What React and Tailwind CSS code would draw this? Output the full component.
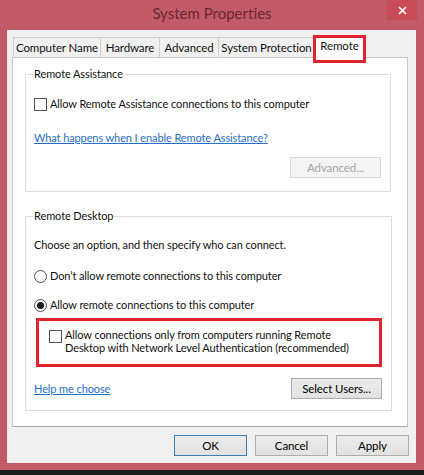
import React from "react";

const tabs = [
  { label: "Computer Name", w: "w-[88px]" },
  { label: "Hardware", w: "w-[60px]" },
  { label: "Advanced", w: "w-[60px]" },
  { label: "System Protection", w: "w-[97px]" },
];

const Checkbox = () => (
  <span className="inline-block w-[13px] h-[13px] border border-[#505050] bg-white shrink-0" />
);

const Radio = ({ checked }) => (
  <span className="flex items-center justify-center w-[13px] h-[13px] rounded-full border border-[#505050] bg-white shrink-0">
    {checked && <span className="w-[7px] h-[7px] rounded-full bg-[#1a1a1a]" />}
  </span>
);

const Button = ({ children, width, isDefault, disabled }) => (
  <button
    type="button"
    className={
      "h-[21px] flex items-center justify-center border text-[11.5px] whitespace-nowrap " +
      width +
      " " +
      (disabled
        ? "bg-[#f4f4f4] border-[#d9d9d9] text-[#a3a3a3]"
        : isDefault
        ? "bg-gradient-to-b from-[#ececec] to-[#e1e1e1] border-[#3c7fb1] text-black"
        : "bg-gradient-to-b from-[#ececec] to-[#e1e1e1] border-[#adadad] text-black")
    }
  >
    {children}
  </button>
);

const App = () => {
  return (
    <div className="w-[424px] h-[475px] bg-[#c25a67] flex flex-col overflow-hidden font-['Lato',sans-serif] text-[11px] tracking-[-0.1px] text-[#111] whitespace-nowrap">
      {/* title bar */}
      <div className="relative h-[30px] flex items-center justify-center">
        <span className="text-[15px] tracking-normal text-[#6b2833] -mt-[3px]">System Properties</span>
        <div className="absolute right-[7px] top-0 w-[30px] h-[20px] bg-[#c94b57] flex items-center justify-center">
          <svg width="9" height="9" viewBox="0 0 9 9">
            <path d="M1 1L8 8M8 1L1 8" stroke="white" strokeWidth="1.6" />
          </svg>
        </div>
      </div>

      {/* window body */}
      <div className="ml-[7px] w-[409px] h-[433px] bg-[#f0f0f0] pt-[5px] pl-[5px]">
        {/* tabs */}
        <div className="flex items-end h-[22px] pl-[1px] relative z-10 text-[11.5px]">
          {tabs.map((t) => (
            <div
              key={t.label}
              className={
                "h-[20px] -ml-[1px] first:ml-0 border border-b-0 border-[#cfcfcf] bg-[#f0f0f0] flex items-center justify-center " +
                t.w
              }
            >
              {t.label}
            </div>
          ))}
          <div className="relative h-[23px] w-[51px] -ml-[1px] -mb-[1px] bg-white border border-b-0 border-[#cfcfcf] flex items-center justify-center pb-[3px]">
            Remote
            <div className="absolute -left-[2px] -right-[2px] -top-[1px] -bottom-[5px] border-[3px] border-[#e0232c]" />
          </div>
        </div>

        {/* tab panel */}
        <div className="w-[396px] h-[370px] bg-white border border-[#c8c8c8] border-b-[#a9a9a9]">
          <fieldset className="mt-[9px] ml-[12px] w-[366px] border border-[#dcdcdc] pl-[8px] pr-[9px] pb-[13px]">
            <legend className="px-[1px] -ml-[1px] leading-[14px]">Remote Assistance</legend>
            <label className="mt-[16px] flex items-center gap-[3px] h-[14px]">
              <Checkbox />
              <span>Allow Remote Assistance connections to this computer</span>
            </label>
            <div className="mt-[20px] h-[14px] leading-[14px]">
              <a className="text-[#1f6fc6] underline cursor-pointer">
                What happens when I enable Remote Assistance?
              </a>
            </div>
            <div className="mt-[12px] flex justify-end">
              <Button width="w-[91px]" disabled>
                Advanced...
              </Button>
            </div>
          </fieldset>

          <fieldset className="mt-[17px] ml-[12px] w-[366px] border border-[#dcdcdc] pl-[8px] pr-[9px] pb-[11px]">
            <legend className="px-[1px] -ml-[1px] leading-[14px]">Remote Desktop</legend>
            <div className="mt-[15px] h-[14px] leading-[14px]">
              Choose an option, and then specify who can connect.
            </div>
            <label className="mt-[17px] flex items-center gap-[3px] h-[14px]">
              <Radio />
              <span>Don’t allow remote connections to this computer</span>
            </label>
            <label className="mt-[15px] flex items-center gap-[3px] h-[14px]">
              <Radio checked />
              <span>Allow remote connections to this computer</span>
            </label>
            <div className="mt-[6px] ml-[2px] w-[346px] h-[49px] border-[3px] border-[#e0232c] pl-[10px] pt-[7px] flex gap-[3px]">
              <span className="mt-[2px]">
                <Checkbox />
              </span>
              <span className="leading-[13px]">
                Allow connections only from computers running Remote
                <br />
                Desktop with Network Level Authentication (recommended)
              </span>
            </div>
            <div className="mt-[11px] flex items-center justify-between">
              <a className="text-[#1f6fc6] underline cursor-pointer pt-[2px]">Help me choose</a>
              <Button width="w-[91px]">Select Users...</Button>
            </div>
          </fieldset>
        </div>

        {/* dialog buttons */}
        <div className="mt-[8px] pr-[7px] flex justify-end gap-[8px]">
          <Button width="w-[73px]" isDefault>
            OK
          </Button>
          <Button width="w-[73px]">Cancel</Button>
          <Button width="w-[73px]">Apply</Button>
        </div>
      </div>

      <div className="h-[7px]" />
      <div className="h-[5px] bg-[#1c1c1c]" />
    </div>
  );
};

export default App;
